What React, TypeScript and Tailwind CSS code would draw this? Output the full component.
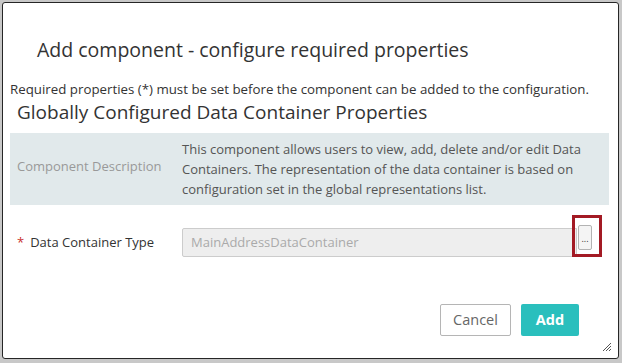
import React from "react";

const font = { fontFamily: '"Open Sans", "Noto Sans", sans-serif' };

function ResizeGrip() {
  return (
    <svg width="10" height="10" viewBox="0 0 10 10" className="absolute right-[6px] bottom-[6px]">
      <path d="M9 1L1 9M9 4L4 9M9 7L7 9" stroke="#555" strokeWidth="1" />
    </svg>
  );
}

export default function App() {
  return (
    <div className="w-[622px] h-[363px] bg-[#c8c8c8] pt-[2px] pl-[2px] pr-[3px] pb-[4px]" style={font}>
      <div className="relative h-full bg-white border border-[#262626] rounded-[3px] flex flex-col">
        <h1 className="pt-[34px] pl-[34px] text-[19.5px] leading-[26px] text-[#333]">
          Add component - configure required properties
        </h1>
        <p className="mt-[17px] pl-[7px] text-[13.3px] leading-[18px] text-[#333]">
          Required properties (*) must be set before the component can be added to the configuration.
        </p>
        <h2 className="mt-[2px] pl-[14px] text-[19px] leading-[24px] text-[#333]">
          Globally Configured Data Container Properties
        </h2>

        <div className="mt-[9px] ml-[7px] mr-[9px] bg-[#e1e9eb] flex items-center py-[6px]">
          <div className="w-[172px] pl-[7px] text-[13px] text-[#999] pb-[4px]">Component Description</div>
          <div className="flex-1 pr-[10px] text-[13px] leading-[20px] text-[#555]">
            This component allows users to view, add, delete and/or edit Data Containers. The representation of
            the data container is based on configuration set in the global representations list.
          </div>
        </div>

        <div className="mt-[10px] ml-[14px] flex items-end">
          <div className="w-[165px] h-[29px] text-[13px] text-[#333] flex items-center">
            <span className="text-[#c9302c] mr-[6px]">*</span>
            Data Container Type
          </div>
          <div className="w-[395px] h-[29px] bg-[#eeeeee] border border-[#cccccc] rounded-l-[2px] flex items-center pl-[8px] text-[13px] text-[#aaaaaa]">
            MainAddressDataContainer
          </div>
          <div className="ml-[-5px] border-[3px] border-[#a31a24] pl-[3px] pr-[7px] pt-[7px] pb-[4px]">
            <button className="w-[14px] h-[25px] bg-[#f4f4f4] border border-[#b3b3b3] rounded-[2px] text-[9px] leading-[9px] text-[#333] flex items-end justify-center pb-[6px]">
              ...
            </button>
          </div>
        </div>

        <div className="mt-auto mb-[22px] mr-[39px] flex justify-end gap-[10px]">
          <button className="w-[71px] h-[32px] border border-[#b5b5b5] rounded-[2px] bg-white text-[14.5px] text-[#666]">
            Cancel
          </button>
          <button className="w-[58px] h-[32px] rounded-[2px] bg-[#2abfbd] text-[14.5px] font-bold text-white">
            Add
          </button>
        </div>
        <ResizeGrip />
      </div>
    </div>
  );
}
